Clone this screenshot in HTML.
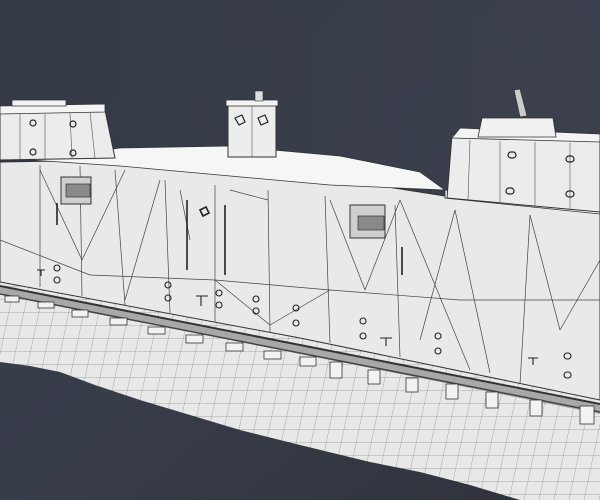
<!DOCTYPE html>
<html><head><meta charset="utf-8"><style>
html,body{margin:0;padding:0;width:600px;height:500px;overflow:hidden;background:#343a46}
</style></head><body>
<svg width="600" height="500" viewBox="0 0 600 500" xmlns="http://www.w3.org/2000/svg">
<defs>
<linearGradient id="bg" x1="0" y1="0" x2="1" y2="1">
<stop offset="0" stop-color="#333945"/><stop offset="0.5" stop-color="#383d4a"/><stop offset="1" stop-color="#2f323a"/>
</linearGradient>
<linearGradient id="bg2" x1="0" y1="0" x2="1" y2="0">
<stop offset="0" stop-color="#333945"/><stop offset="1" stop-color="#3f4350"/>
</linearGradient>
<pattern id="grid" width="15" height="13" patternUnits="userSpaceOnUse" patternTransform="skewX(-12)">
<rect width="15" height="13" fill="#e8e8e8"/>
<path d="M0 0H15M0 0V13" stroke="#666" stroke-width="0.5"/>
</pattern>
</defs>
<rect width="600" height="500" fill="url(#bg)"/>
<rect width="600" height="250" fill="url(#bg2)" opacity="0.6"/>
<!-- ground -->
<polygon points="0,270 600,395 600,500 520,500 470,485 420,472 370,462 300,445 240,430 190,415 140,400 95,385 60,372 30,366 0,362" fill="url(#grid)"/>
<!-- track -->
<polygon points="0,286 600,404 600,414 0,294" fill="#a8a8a8"/>
<line x1="0" y1="286" x2="600" y2="404" stroke="#333" stroke-width="2"/>
<line x1="0" y1="294" x2="600" y2="412" stroke="#444" stroke-width="1.5"/>
<g fill="#f2f2f2" stroke="#333" stroke-width="0.8">
<rect x="5" y="296" width="14" height="6"/><rect x="38" y="302" width="16" height="6"/><rect x="72" y="310" width="16" height="7"/>
<rect x="110" y="318" width="17" height="7"/><rect x="148" y="327" width="17" height="7"/><rect x="186" y="335" width="17" height="8"/>
<rect x="226" y="343" width="17" height="8"/><rect x="264" y="351" width="17" height="8"/><rect x="300" y="357" width="16" height="9"/>
<rect x="330" y="362" width="12" height="16"/><rect x="368" y="370" width="12" height="14"/><rect x="406" y="378" width="12" height="14"/>
<rect x="446" y="384" width="12" height="15"/><rect x="486" y="392" width="12" height="16"/><rect x="530" y="400" width="12" height="16"/><rect x="580" y="406" width="14" height="18"/>
</g>
<!-- main body -->
<polygon points="0,162 120,160 330,178 445,196 600,212 600,400 300,338 0,282" fill="#e9e9e9" stroke="#333" stroke-width="1"/>
<!-- roof -->
<polygon points="30,160 120,148 230,146 340,156 420,172 445,190 330,185 120,166" fill="#f6f6f6" stroke="#333" stroke-width="0.8"/>
<polygon points="445,190 600,204 600,214 445,198" fill="#f4f4f4" stroke="#333" stroke-width="0.8"/>
<!-- wire lines -->
<g stroke="#444" stroke-width="0.7" fill="none">
<line x1="40" y1="165" x2="40" y2="287"/><line x1="80" y1="166" x2="82" y2="296"/>
<line x1="115" y1="170" x2="125" y2="305"/><line x1="165" y1="180" x2="170" y2="313"/>
<line x1="215" y1="185" x2="215" y2="322"/><line x1="268" y1="190" x2="270" y2="332"/>
<line x1="325" y1="196" x2="330" y2="343"/><line x1="395" y1="205" x2="400" y2="357"/>
<line x1="455" y1="210" x2="490" y2="373"/><line x1="530" y1="215" x2="520" y2="384"/>
<line x1="40" y1="170" x2="82" y2="260"/><line x1="82" y1="260" x2="125" y2="170"/>
<line x1="125" y1="300" x2="160" y2="180"/><line x1="0" y1="240" x2="90" y2="275"/>
<line x1="90" y1="275" x2="215" y2="280"/><line x1="215" y1="280" x2="330" y2="290"/>
<line x1="330" y1="200" x2="365" y2="290"/><line x1="365" y1="290" x2="400" y2="200"/>
<line x1="330" y1="290" x2="460" y2="300"/><line x1="460" y1="300" x2="600" y2="300"/>
<line x1="400" y1="200" x2="470" y2="370"/><line x1="455" y1="210" x2="420" y2="340"/>
<line x1="530" y1="215" x2="560" y2="330"/><line x1="560" y1="330" x2="600" y2="260"/>
<line x1="215" y1="280" x2="270" y2="325"/><line x1="270" y1="325" x2="330" y2="290"/>
<line x1="180" y1="190" x2="190" y2="240"/><line x1="230" y1="190" x2="268" y2="200"/>
</g>
<!-- left turret -->
<polygon points="0,112 105,110 115,158 0,160" fill="#ececec" stroke="#333" stroke-width="1"/>
<polygon points="0,106 105,104 105,112 0,114" fill="#f4f4f4" stroke="#333" stroke-width="0.8"/>
<polygon points="12,100 66,100 66,106 12,106" fill="#f2f2f2" stroke="#333" stroke-width="0.8"/>
<g stroke="#555" stroke-width="0.6"><line x1="20" y1="114" x2="20" y2="160"/><line x1="45" y1="114" x2="45" y2="160"/><line x1="70" y1="113" x2="72" y2="158"/><line x1="90" y1="112" x2="95" y2="158"/></g>
<!-- middle tower -->
<rect x="228" y="103" width="48" height="54" fill="#ededed" stroke="#333" stroke-width="1"/>
<line x1="252" y1="106" x2="252" y2="157" stroke="#555" stroke-width="0.6"/>
<rect x="226" y="100" width="52" height="6" fill="#f4f4f4" stroke="#333" stroke-width="0.8"/>
<rect x="255" y="91" width="8" height="10" fill="#ddd" stroke="#333" stroke-width="0.6"/>
<path d="M235 118l7-3 3 7-6 3z M258 118l7-3 3 7-7 3z" fill="none" stroke="#222" stroke-width="1.2"/>
<!-- right turret -->
<polygon points="452,135 600,140 600,212 447,198" fill="#ececec" stroke="#333" stroke-width="1"/>
<polygon points="460,128 600,134 600,142 452,138" fill="#f4f4f4" stroke="#333" stroke-width="0.8"/>
<polygon points="482,118 553,118 556,137 478,137" fill="#f1f1f1" stroke="#333" stroke-width="0.8"/>
<polygon points="514,90 520,89 527,116 520,117" fill="#ccc" stroke="#333" stroke-width="0.7"/>
<g stroke="#555" stroke-width="0.6"><line x1="470" y1="140" x2="468" y2="200"/><line x1="500" y1="141" x2="500" y2="204"/><line x1="535" y1="142" x2="535" y2="207"/><line x1="570" y1="143" x2="570" y2="210"/></g>
<g fill="none" stroke="#222" stroke-width="1.2">
<rect x="508" y="152" width="8" height="6" rx="3"/><rect x="506" y="188" width="8" height="6" rx="3"/><rect x="566" y="156" width="8" height="6" rx="3"/><rect x="566" y="191" width="8" height="6" rx="3"/>
<rect x="30" y="120" width="6" height="6" rx="3"/><rect x="30" y="149" width="6" height="6" rx="3"/><rect x="70" y="121" width="6" height="6" rx="3"/><rect x="70" y="150" width="6" height="6" rx="3"/>
</g>
<!-- gun ports -->
<rect x="61" y="177" width="30" height="27" fill="#cfcfcf" stroke="#333"/>
<rect x="66" y="184" width="24" height="13" fill="#8a8a8a" stroke="#333" stroke-width="0.7"/>
<rect x="350" y="205" width="35" height="33" fill="#cfcfcf" stroke="#333"/>
<rect x="358" y="216" width="26" height="14" fill="#8a8a8a" stroke="#333" stroke-width="0.7"/>
<!-- handles -->
<g stroke="#222" stroke-width="1.6" fill="none">
<path d="M57 203v22"/><path d="M187 200v70"/><path d="M225 205v70"/><path d="M402 247v28"/>
<path d="M200 210l6-3 3 6-6 3z"/>
</g>
<!-- hatches -->
<g fill="none" stroke="#222" stroke-width="1.1">
<rect x="54" y="265" width="6" height="6" rx="3"/><rect x="54" y="277" width="6" height="6" rx="3"/>
<rect x="165" y="282" width="6" height="6" rx="3"/><rect x="165" y="295" width="6" height="6" rx="3"/>
<rect x="216" y="290" width="6" height="6" rx="3"/><rect x="216" y="302" width="6" height="6" rx="3"/>
<rect x="253" y="296" width="6" height="6" rx="3"/><rect x="253" y="308" width="6" height="6" rx="3"/>
<rect x="293" y="305" width="6" height="6" rx="3"/><rect x="293" y="320" width="6" height="6" rx="3"/>
<rect x="360" y="318" width="6" height="6" rx="3"/><rect x="360" y="333" width="6" height="6" rx="3"/>
<rect x="435" y="333" width="6" height="6" rx="3"/><rect x="435" y="348" width="6" height="6" rx="3"/>
<rect x="564" y="353" width="7" height="6" rx="3"/><rect x="564" y="372" width="7" height="6" rx="3"/>
<path d="M37 270h8M41 270v6M196 296h12M201 296v10M380 338h12M386 338v8M528 358h10M533 358v7"/>
</g>
</svg>
</body></html>
